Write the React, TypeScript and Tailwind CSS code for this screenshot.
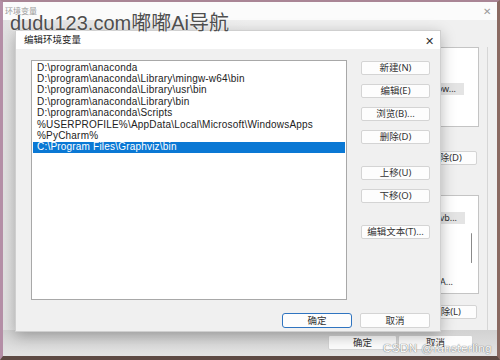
import React from 'react'

const paths = [
  'D:\\program\\anaconda',
  'D:\\program\\anaconda\\Library\\mingw-w64\\bin',
  'D:\\program\\anaconda\\Library\\usr\\bin',
  'D:\\program\\anaconda\\Library\\bin',
  'D:\\program\\anaconda\\Scripts',
  '%USERPROFILE%\\AppData\\Local\\Microsoft\\WindowsApps',
  '%PyCharm%',
  'C:\\Program Files\\Graphviz\\bin',
]

const sideButtons = [
  { label: '新建(N)', gap: false },
  { label: '编辑(E)', gap: false },
  { label: '浏览(B)...', gap: false },
  { label: '删除(D)', gap: false },
  { label: '上移(U)', gap: true },
  { label: '下移(O)', gap: false },
  { label: '编辑文本(T)...', gap: true },
]

const font = "font-['Noto_Sans','Noto_Sans_CJK_SC',sans-serif]"

const WinButton: React.FC<{ label: string; className?: string }> = ({ label, className }) => (
  <button
    className={`h-[14px] flex items-center justify-center rounded-[2px] border border-[#d4d4d4] bg-[#fdfdfd] text-[9.5px] leading-none text-[#333] ${className ?? ''}`}
  >
    {label}
  </button>
)

export default function App() {
  return (
    <div
      className={`relative w-[500px] h-[360px] overflow-hidden border-t-[2px] border-l-[3px] border-r-[3px] border-b-[4px] border-t-[#a98595] border-l-[#b48ea6] border-r-[#8a6a62] border-b-[#5e4a44] ${font}`}
    >
      {/* outer window: 环境变量 */}
      <div className="flex flex-col w-full h-full bg-[#f0f0f0]">
        <div className="h-[18px] shrink-0 bg-[#fbfbfb] flex items-center justify-between pl-[2px] pr-[6px]">
          <span className="text-[8px] text-[#9a9a9a] leading-none">环境变量</span>
          <span className="text-[10px] text-[#9a9a9a] leading-none">✕</span>
        </div>

        <div className="flex-1 flex flex-col bg-gradient-to-r from-[#e2e2e2] via-[#f0f0f0] to-[#f0f0f0]">
          <div className="flex justify-end pr-[9px] pt-[27px]">
            <div className="w-[108px] flex flex-col pr-[8px] pb-[11px] border-r border-[#d6d6d6]">
              {/* user variables box */}
              <div className="h-[80px] bg-white border border-[#c4c4c4] pt-[35px]">
                <div className="w-[83px] h-[12px] bg-[#e4e4e4] text-[9px] leading-[12px] text-right pr-[8px] text-[#333]">
                  Low...
                </div>
              </div>
              <div className="flex justify-end mt-[24px] pr-[2px]">
                <WinButton label="删除(D)" className="w-[62px] h-[12px]" />
              </div>
              {/* system variables box */}
              <div className="relative h-[99px] mt-[30px] bg-white border border-[#c4c4c4] pt-[16px]">
                <div className="w-[84px] h-[12px] bg-[#e4e4e4] text-[9px] leading-[12px] text-right pr-[8px] text-[#333]">
                  Wvb...
                </div>
                <div className="mt-[52px] w-[80px] h-[12px] text-[9px] leading-[12px] text-right pr-[8px] text-[#333]">
                  DA...
                </div>
                <div className="absolute right-[6px] top-[37px] w-[1.5px] h-[30px] rounded bg-[#8a8a8a]" />
              </div>
              <div className="flex justify-end mt-[11px] pr-[2px]">
                <WinButton label="删除(L)" className="w-[62px] h-[11px]" />
              </div>
            </div>
          </div>
          <div className="mt-auto h-[26px] flex items-start justify-end pr-[24px] pt-[5px] gap-[1px] bg-gradient-to-b from-[#d2d2d2] to-[#e4e4e4]">
            <WinButton label="确定" className="w-[69px] h-[15px] bg-[#e9e9e9]" />
            <WinButton label="取消" className="w-[75px] h-[15px] bg-[#e9e9e9]" />
          </div>
        </div>
      </div>

      {/* dialog: 编辑环境变量 */}
      <div className="absolute left-[12px] top-[28px] w-[426px] h-[302px] flex flex-col border border-[#cfcfcf] shadow-[0_4px_14px_rgba(0,0,0,0.28)]">
        <div className="h-[18px] shrink-0 bg-white flex items-center justify-between pl-[8px] pr-[6px]">
          <span className="text-[9.5px] leading-none text-[#222]">编辑环境变量</span>
          <span className="text-[11px] leading-none text-[#333]">✕</span>
        </div>
        <div className="flex-1 flex flex-col bg-[#f0f0f0] pl-[15px] pr-[10px] pt-[11px]">
          <div className="flex gap-[14px]">
            <div className="w-[316px] h-[240px] bg-white border border-[#a8a8a8] pt-[1px] px-[1px]">
              {paths.map((p, i) => (
                <div
                  key={p}
                  className={`h-[11.4px] flex items-center pl-[4px] text-[10px] leading-[10px] tracking-[0.2px] whitespace-nowrap font-['Liberation_Sans',sans-serif] ${
                    i === paths.length - 1 ? 'bg-[#0a78d4] text-white' : 'text-[#222]'
                  }`}
                >
                  {p}
                </div>
              ))}
            </div>
            <div className="w-[69px] flex flex-col pt-[1px]">
              {sideButtons.map((b, i) => (
                <WinButton
                  key={b.label}
                  label={b.label}
                  className={i === 0 ? '' : b.gap ? 'mt-[22px]' : 'mt-[9px]'}
                />
              ))}
            </div>
          </div>
          <div className="flex justify-end gap-[8px] mt-[13px]">
            <button className="w-[70px] h-[15px] rounded-[3px] border-[1.5px] border-[#2f74c0] bg-[#fdfdfd] text-[9.5px] leading-none text-[#333]">
              确定
            </button>
            <WinButton label="取消" className="w-[70px] h-[15px]" />
          </div>
        </div>
      </div>

      {/* watermarks */}
      <div className="absolute left-[7px] top-[11px] text-[20px] leading-none text-[#4e4e4e] font-['Liberation_Sans','Noto_Sans_CJK_SC',sans-serif] [text-shadow:0_0_2px_#fff]">
        dudu123.com嘟嘟Ai导航
      </div>
      <div className="absolute left-[380px] top-[341px] text-[11.5px] leading-none text-white font-['Liberation_Sans',sans-serif] tracking-[0.5px] [text-shadow:0_0_1px_#777,0_0_1px_#777]">
        CSDN @fansterling
      </div>
    </div>
  )
}
